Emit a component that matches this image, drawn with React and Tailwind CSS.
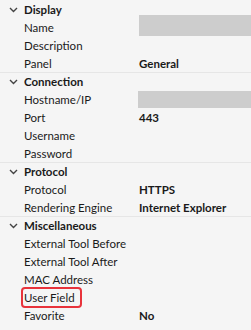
import React from 'react';

const groups = [
  {
    title: 'Display',
    rows: [
      { label: 'Name', blank: 'left-0 top-[-4px] h-[21px]' },
      { label: 'Description' },
      { label: 'Panel', value: 'General' },
    ],
  },
  {
    title: 'Connection',
    rows: [
      { label: 'Hostname/IP', blank: 'left-[-1px] top-0 h-[17px]' },
      { label: 'Port', value: '443' },
      { label: 'Username' },
      { label: 'Password' },
    ],
  },
  {
    title: 'Protocol',
    rows: [
      { label: 'Protocol', value: 'HTTPS' },
      { label: 'Rendering Engine', value: 'Internet Explorer' },
    ],
  },
  {
    title: 'Miscellaneous',
    rows: [
      { label: 'External Tool Before' },
      { label: 'External Tool After' },
      { label: 'MAC Address' },
      { label: 'User Field', marked: true },
      { label: 'Favorite', value: 'No' },
    ],
  },
];

function Chevron() {
  return (
    <svg width="9" height="6" viewBox="0 0 9 6" className="text-[#444]">
      <path d="M1 1l3.5 3.5L8 1" fill="none" stroke="currentColor" strokeWidth="1.4" />
    </svg>
  );
}

export default function App() {
  return (
    <div
      className="w-[251px] h-[330px] bg-[#f5f5f5] text-[#1a1a1a] text-[11.5px] overflow-hidden pt-px"
      style={{ fontFamily: 'Lato, "Open Sans", sans-serif' }}
    >
      {groups.map((g, gi) => (
        <div key={g.title}>
          <div className="h-[18px] flex items-center">
            <div className="w-[24px] flex justify-center pl-[2px]">
              <Chevron />
            </div>
            <span className="font-bold">{g.title}</span>
          </div>
          {g.rows.map((r, ri) => (
            <div
              key={r.label}
              className={
                'h-[18px] flex items-center ' +
                (ri === g.rows.length - 1 && gi < groups.length - 1 ? 'border-b border-[#e6e6e6]' : '')
              }
            >
              <div className="w-[139px] pl-[24px] shrink-0 whitespace-nowrap relative">
                <span>{r.label}</span>
                {r.marked && (
                  <div className="absolute left-[21px] top-[-2px] w-[61px] h-[21px] border-2 border-[#e8333b] rounded-[4px]" />
                )}
              </div>
              <div className="flex-1 h-full flex items-center relative">
                {r.blank ? (
                  <div className={'absolute right-0 bg-[#cdcdcd] ' + r.blank} />
                ) : (
                  <span className="font-bold whitespace-nowrap">{r.value}</span>
                )}
              </div>
            </div>
          ))}
        </div>
      ))}
    </div>
  );
}
